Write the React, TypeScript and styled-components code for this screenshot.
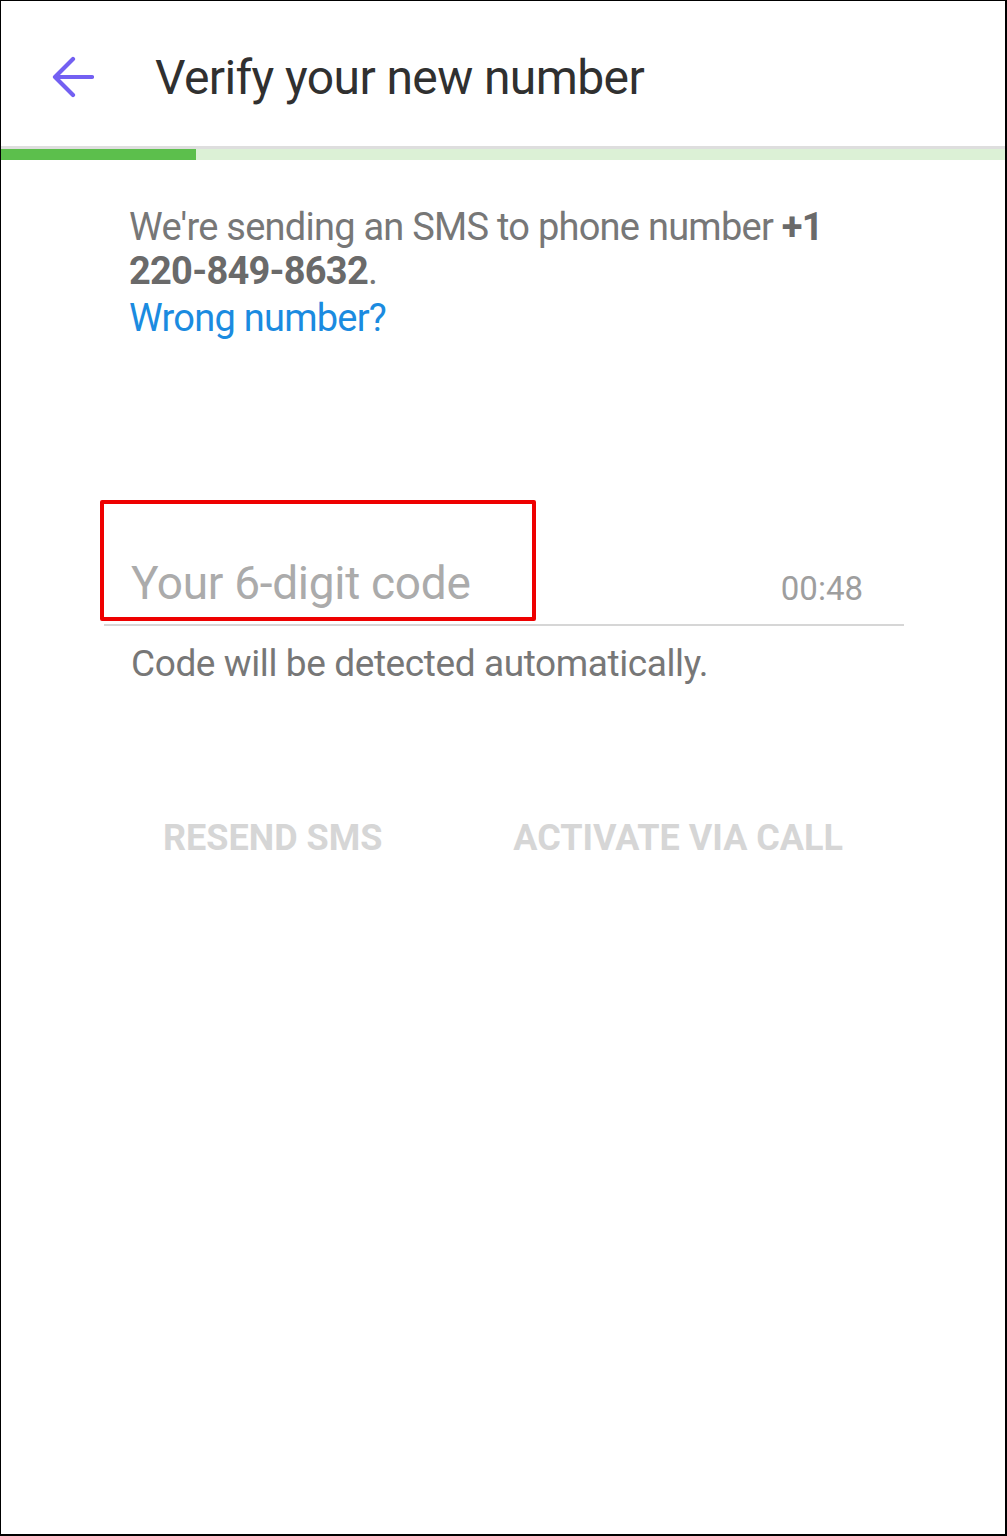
import React from "react";
import styled, { createGlobalStyle } from "styled-components";

const Global = createGlobalStyle`
  html, body { margin: 0; padding: 0; background: #fff; }
  body { font-family: Roboto, "Noto Sans", "Liberation Sans", sans-serif; }
  * { box-sizing: border-box; }
`;

const Frame = styled.div`
  width: 1007px;
  height: 1536px;
  border-style: solid;
  border-color: #000;
  border-width: 1px 2px 2px 1px;
  background: #fff;
  display: flex;
  flex-direction: column;
  overflow: hidden;
`;

const Header = styled.header`
  height: 145px;
  display: flex;
  align-items: center;
  padding: 7px 0 0 50px;
  gap: 60px;
`;

const BackButton = styled.button`
  width: 44px;
  height: 44px;
  border: none;
  background: none;
  padding: 0;
  display: flex;
  align-items: center;
  justify-content: center;
  color: #7360f2;
`;

const Title = styled.h1`
  margin: 0;
  font-size: 48px;
  font-weight: 400;
  color: #303030;
  letter-spacing: -0.6px;
`;

const Progress = styled.div`
  border-top: 3px solid #dedede;
  height: 14px;
  background: #dcf1d6;
  display: flex;
`;

const ProgressFill = styled.div`
  background: #5cbf4c;
  height: 100%;
`;

const Content = styled.main`
  display: flex;
  flex-direction: column;
  padding: 45px 0 0 128px;
`;

const Message = styled.p`
  margin: 0;
  width: 710px;
  font-size: 38px;
  line-height: 44px;
  letter-spacing: -0.75px;
  color: #777;
`;

const Phone = styled.strong`
  color: #6a6a6a;
  font-weight: 700;
`;

const Link = styled.a`
  font-size: 38px;
  line-height: 50px;
  letter-spacing: -0.75px;
  color: #1b8be0;
  text-decoration: none;
`;

const FieldWrap = styled.div`
  margin: 159px 0 0 -25px;
  width: 800px;
  position: relative;
`;

const FieldRow = styled.div`
  height: 124px;
  border-bottom: 2px solid #d6d6d6;
  display: flex;
  align-items: flex-end;
  justify-content: space-between;
  padding: 0 41px 18px 27px;
`;

const Placeholder = styled.span`
  font-size: 46px;
  letter-spacing: -0.3px;
  color: #ababab;
  line-height: 1;
`;

const Timer = styled.span`
  font-size: 33px;
  color: #9e9e9e;
  line-height: 1;
  padding-bottom: 1px;
`;

const Highlight = styled.div`
  position: absolute;
  left: -4px;
  top: -2px;
  width: 436px;
  height: 121px;
  border: 4px solid #ee0000;
  border-radius: 2px;
  pointer-events: none;
`;

const Helper = styled.p`
  margin: 16px 0 0 27px;
  font-size: 37px;
  letter-spacing: -0.4px;
  color: #777;
`;

const Actions = styled.div`
  display: flex;
  gap: 131px;
  margin: 132px 0 0 34px;
`;

const ActionButton = styled.button`
  border: none;
  background: none;
  padding: 0;
  font-family: inherit;
  font-size: 36px;
  font-weight: 700;
  color: #d6d6d6;
  text-transform: uppercase;
`;

export default function App() {
  const progress = 195;
  return (
    <>
      <Global />
      <Frame>
        <Header>
          <BackButton aria-label="Back">
            <svg width="42" height="42" viewBox="0 0 42 42" fill="none">
              <path d="M40 21H4M21 3L3 21l18 18" stroke="currentColor" strokeWidth="4.2" strokeLinecap="round" strokeLinejoin="round" />
            </svg>
          </BackButton>
          <Title>Verify your new number</Title>
        </Header>
        <Progress>
          <ProgressFill style={{ width: progress }} />
        </Progress>
        <Content>
          <Message>
            We're sending an SMS to phone number <Phone>+1</Phone> <Phone>220-849-8632</Phone>.
          </Message>
          <Link href="#">Wrong number?</Link>
          <FieldWrap>
            <FieldRow>
              <Placeholder>Your 6-digit code</Placeholder>
              <Timer>00:48</Timer>
            </FieldRow>
            <Highlight />
            <Helper>Code will be detected automatically.</Helper>
          </FieldWrap>
          <Actions>
            <ActionButton>Resend SMS</ActionButton>
            <ActionButton>Activate via call</ActionButton>
          </Actions>
        </Content>
      </Frame>
    </>
  );
}
